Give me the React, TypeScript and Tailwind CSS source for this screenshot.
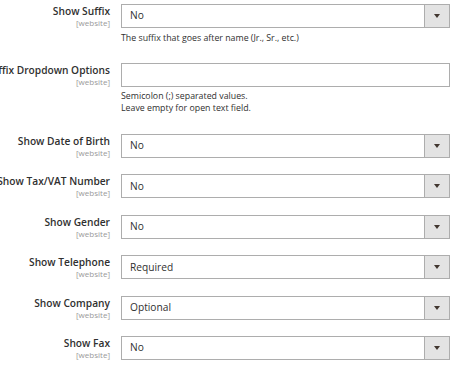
import React from "react";

const font = { fontFamily: '"Open Sans", "Noto Sans", sans-serif' };

function Label({ title }: { title: string }) {
  return (
    <div className="w-[110px] h-[24px] shrink-0 flex flex-col items-end whitespace-nowrap">
      <div className="text-[10.2px] leading-[14px] font-semibold text-[#303030]">{title}</div>
      <div className="text-[8px] leading-[10px] text-[#999999]">[website]</div>
    </div>
  );
}

function Select({ value }: { value: string }) {
  return (
    <div className="flex h-[24px] w-[329px] border border-[#adadad] bg-white">
      <div className="flex-1 flex items-center pl-[8px] text-[10.2px] text-[#303030]">{value}</div>
      <div className="w-[25px] border-l border-[#adadad] bg-[#e3e3e3] flex items-center justify-center">
        <div className="w-0 h-0 border-l-[3px] border-r-[3px] border-t-[4px] border-l-transparent border-r-transparent border-t-[#41362f]" />
      </div>
    </div>
  );
}

function Row({ title, children, className = "" }: { title: string; children: React.ReactNode; className?: string }) {
  return (
    <div className={"flex items-start gap-[11px] " + className}>
      <Label title={title} />
      <div className="flex flex-col">{children}</div>
    </div>
  );
}

export default function App() {
  const rest: [string, string][] = [
    ["Show Date of Birth", "No"],
    ["Show Tax/VAT Number", "No"],
    ["Show Gender", "No"],
    ["Show Telephone", "Required"],
    ["Show Company", "Optional"],
    ["Show Fax", "No"],
  ];
  return (
    <div className="w-[474px] h-[366px] bg-white overflow-hidden pt-[4px]" style={font}>
      <Row title="Show Suffix">
        <Select value="No" />
        <div className="mt-[4px] text-[8.8px] leading-[12px] text-[#303030]">
          The suffix that goes after name (Jr., Sr., etc.)
        </div>
      </Row>
      <Row title="Suffix Dropdown Options" className="mt-[19px]">
        <div className="h-[24px] w-[329px] border border-[#adadad] bg-white" />
        <div className="mt-[3px] text-[8.8px] leading-[12px] text-[#303030]">
          <div>Semicolon (;) separated values.</div>
          <div>Leave empty for open text field.</div>
        </div>
      </Row>
      <div className="mt-[20px] flex flex-col gap-[16.4px]">
        {rest.map(([t, v]) => (
          <Row key={t} title={t}>
            <Select value={v} />
          </Row>
        ))}
      </div>
    </div>
  );
}
